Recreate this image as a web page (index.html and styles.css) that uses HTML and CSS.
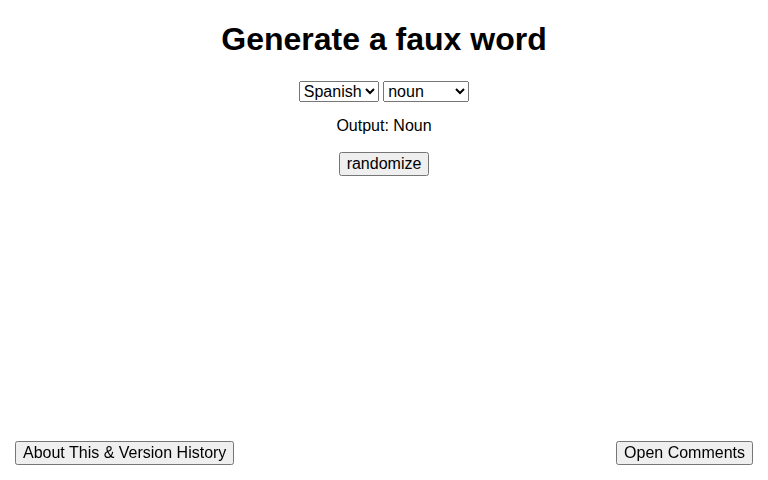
FILE: index.html
```html
<!DOCTYPE html>
<html lang="en">
<head>
  <meta charset="UTF-8" />
  <meta name="viewport" content="width=device-width, initial-scale=1.0"/>
  <title>Generate a faux word</title>
  <link rel="stylesheet" href="styles.css">
</head>
<body>
  <div class="container">
    <h1>Generate a faux word</h1>
    <div class="controls">
      <select id="language" name="language">
        <option value="spanish">Spanish</option>
        <option value="french">French</option>
        <option value="italian">Italian</option>
      </select>
      <select id="kind" name="kind" class="kind">
        <option value="noun">noun</option>
        <option value="verb">verb</option>
        <option value="adjective">adjective</option>
      </select>
    </div>
    <p class="output">Output: <span id="output">Noun</span></p>
    <button type="button" id="randomize">randomize</button>
  </div>

  <div class="footer">
    <button type="button">About This &amp; Version History</button>
    <button type="button">Open Comments</button>
  </div>
</body>
</html>
```

FILE: styles.css
```css
body {
  margin: 0;
  font-family: "Liberation Sans", Arial, sans-serif;
  color: #000;
  background: #fff;
}
.container {
  text-align: center;
  padding-top: 1px;
}
h1 {
  font-size: 32px;
  margin: 20px 0 23px;
}
select, button {
  font-family: "Liberation Sans", Arial, sans-serif;
  font-size: 16px;
}
.kind {
  width: 86px;
}
.output {
  margin: 15px 0 17px;
}
.footer {
  position: fixed;
  left: 15px;
  right: 15px;
  bottom: 15px;
  display: flex;
  justify-content: space-between;
}
```
